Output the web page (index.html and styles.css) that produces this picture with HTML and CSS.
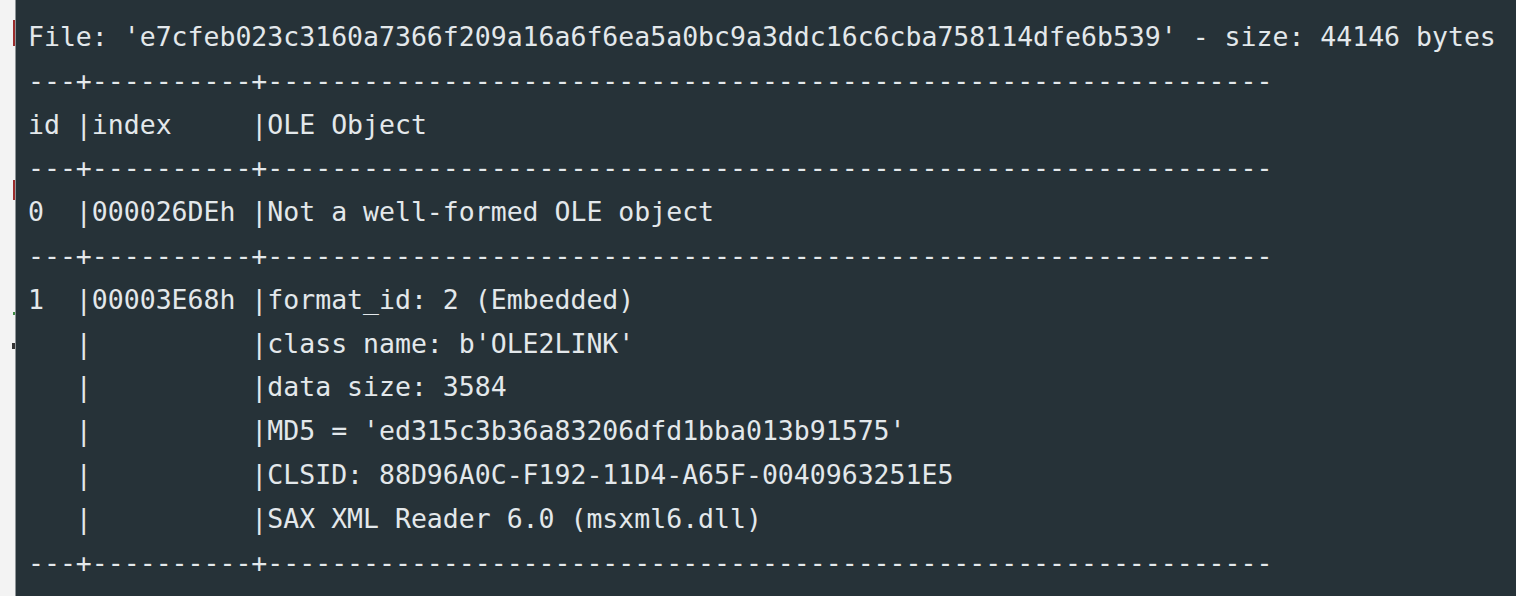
FILE: index.html
```html
<!DOCTYPE html>
<html>
<head>
<meta charset="utf-8">
<link rel="stylesheet" href="styles.css">
</head>
<body>
<div class="screen">
  <div class="strip">
    <span class="mark red first"></span>
    <span class="mark red second"></span>
    <span class="mark green"></span>
    <span class="mark dark"></span>
  </div>
  <pre class="term">File: 'e7cfeb023c3160a7366f209a16a6f6ea5a0bc9a3ddc16c6cba758114dfe6b539' - size: 44146 bytes
---+----------+---------------------------------------------------------------
id |index     |OLE Object
---+----------+---------------------------------------------------------------
0  |000026DEh |Not a well-formed OLE object
---+----------+---------------------------------------------------------------
1  |00003E68h |format_id: 2 (Embedded)
   |          |class name: b'OLE2LINK'
   |          |data size: 3584
   |          |MD5 = 'ed315c3b36a83206dfd1bba013b91575'
   |          |CLSID: 88D96A0C-F192-11D4-A65F-0040963251E5
   |          |SAX XML Reader 6.0 (msxml6.dll)
---+----------+---------------------------------------------------------------</pre>
</div>
</body>
</html>
```
FILE: styles.css
```css
html, body {
  margin: 0;
  padding: 0;
  background: #263238;
}
.screen {
  display: flex;
  width: 1516px;
  height: 596px;
  overflow: hidden;
}
.strip {
  width: 15px;
  flex: 0 0 15px;
  background: #f3f3f3;
  border-right: 1px solid #8e9497;
  display: flex;
  flex-direction: column;
  align-items: flex-end;
}
.mark {
  display: block;
  width: 2px;
}
.red { background: #9b2c2c; }
.first { margin-top: 20px; height: 26px; }
.second { margin-top: 134px; height: 20px; }
.green { margin-top: 112px; height: 3px; background: #3f8a45; }
.dark { margin-top: 28px; height: 6px; width: 3px; background: #333; }
.term {
  margin: 0;
  padding: 15px 0 0 12px;
  flex: 1;
  font-family: "DejaVu Sans Mono", monospace;
  font-size: 26.5px;
  line-height: 43.8px;
  color: #e3e8eb;
  white-space: pre;
}
```
